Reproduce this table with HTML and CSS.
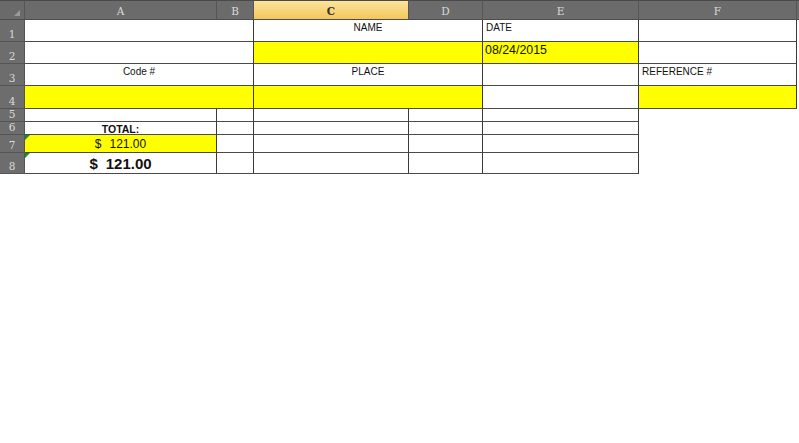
FILE: index.html
```html
<!DOCTYPE html>
<html>
<head>
<meta charset="utf-8">
<link rel="stylesheet" href="styles.css">
</head>
<body>
<div class="sheet">
  <div class="corner"><span class="tri"></span></div>
  <div class="ch">A</div>
  <div class="ch">B</div>
  <div class="ch sel">C</div>
  <div class="ch">D</div>
  <div class="ch">E</div>
  <div class="ch">F</div>
  <div class="ch rest"></div>

  <div class="rh">1</div>
  <div class="c s2"></div>
  <div class="c s2 mid top">NAME</div>
  <div class="c top lft">DATE</div>
  <div class="c"></div>
  <div class="blank"></div>

  <div class="rh">2</div>
  <div class="c s2"></div>
  <div class="c s2 y"></div>
  <div class="c y lft date">08/24/2015</div>
  <div class="c"></div>
  <div class="blank"></div>

  <div class="rh">3</div>
  <div class="c s2 mid top">Code #</div>
  <div class="c s2 mid top">PLACE</div>
  <div class="c"></div>
  <div class="c top lft">REFERENCE #</div>
  <div class="blank"></div>

  <div class="rh">4</div>
  <div class="c s2 y"></div>
  <div class="c s2 y"></div>
  <div class="c"></div>
  <div class="c y"></div>
  <div class="blank"></div>

  <div class="rh">5</div>
  <div class="c"></div><div class="c"></div><div class="c"></div><div class="c"></div><div class="c"></div>
  <div class="blank s2"></div>

  <div class="rh">6</div>
  <div class="c mid total">TOTAL:</div><div class="c"></div><div class="c"></div><div class="c"></div><div class="c"></div>
  <div class="blank s2"></div>

  <div class="rh">7</div>
  <div class="c mid y amt flag"><span>$</span><span>121.00</span></div><div class="c"></div><div class="c"></div><div class="c"></div><div class="c"></div>
  <div class="blank s2"></div>

  <div class="rh">8</div>
  <div class="c mid big flag"><span>$</span><span>121.00</span></div><div class="c"></div><div class="c"></div><div class="c"></div><div class="c"></div>
  <div class="blank s2"></div>
</div>
</body>
</html>
```

FILE: styles.css
```css
html, body {
  margin: 0;
  padding: 0;
  background: #ffffff;
}

.sheet {
  display: grid;
  grid-template-columns: 25px 192px 37px 155px 74px 156px 158px 1fr;
  grid-template-rows: 20px 22px 22px 22px 23px 13px 13px 18px 21px;
  width: 799px;
  font-family: "Liberation Sans", Arial, sans-serif;
  color: #111;
}

.corner {
  background: #6a6a6a;
  border-top: 1px solid #4a4a4a;
  border-right: 1px solid #555;
  border-bottom: 1px solid #4d4d4d;
  box-sizing: border-box;
  position: relative;
}

.tri {
  position: absolute;
  right: 4px;
  bottom: 3px;
  width: 0;
  height: 0;
  border-left: 6px solid transparent;
  border-bottom: 6px solid #9a9a9a;
}

.ch {
  background: #6b6b6b;
  border-top: 1px solid #4a4a4a;
  border-right: 1px solid #555;
  border-bottom: 1px solid #4d4d4d;
  box-sizing: border-box;
  color: #dadada;
  font-family: "DejaVu Serif", "Liberation Serif", serif;
  font-size: 10.5px;
  display: flex;
  align-items: center;
  justify-content: center;
  padding-top: 1px;
}

.ch.sel {
  background: linear-gradient(#fbe49c, #f5c65c);
  color: #333;
  font-weight: bold;
}

.ch.rest {
  border-right: none;
}

.rh {
  background: #6d6d6d;
  border-right: 1px solid #555;
  border-bottom: 1px solid #555;
  box-sizing: border-box;
  color: #dadada;
  font-family: "DejaVu Serif", "Liberation Serif", serif;
  font-size: 10.5px;
  display: flex;
  align-items: flex-end;
  justify-content: center;
  line-height: 11px;
  padding-bottom: 1px;
}

.c {
  border-right: 1px solid #3a3a3a;
  border-bottom: 1px solid #4a4a4a;
  box-sizing: border-box;
  font-size: 10px;
  display: flex;
  align-items: center;
  overflow: hidden;
  white-space: nowrap;
  position: relative;
}

.s2 {
  grid-column: span 2;
}

.y {
  background: #ffff00;
}

.mid {
  justify-content: center;
}

.lft {
  padding-left: 3px;
}

.top {
  align-items: flex-start;
  padding-top: 2px;
}

.date {
  font-size: 12.4px;
  padding-left: 2px;
  align-items: flex-start;
  padding-top: 1px;
}

.total {
  font-weight: bold;
  font-size: 10.5px;
  padding-top: 1px;
}

.amt {
  font-size: 12px;
  gap: 8px;
}

.big {
  font-size: 15px;
  font-weight: bold;
  gap: 8px;
  padding-top: 1px;
}

.flag::before {
  content: "";
  position: absolute;
  left: 0;
  top: 0;
  width: 0;
  height: 0;
  border-top: 5px solid #1e8a2a;
  border-right: 5px solid transparent;
}

.blank {
  background: #ffffff;
}
```
